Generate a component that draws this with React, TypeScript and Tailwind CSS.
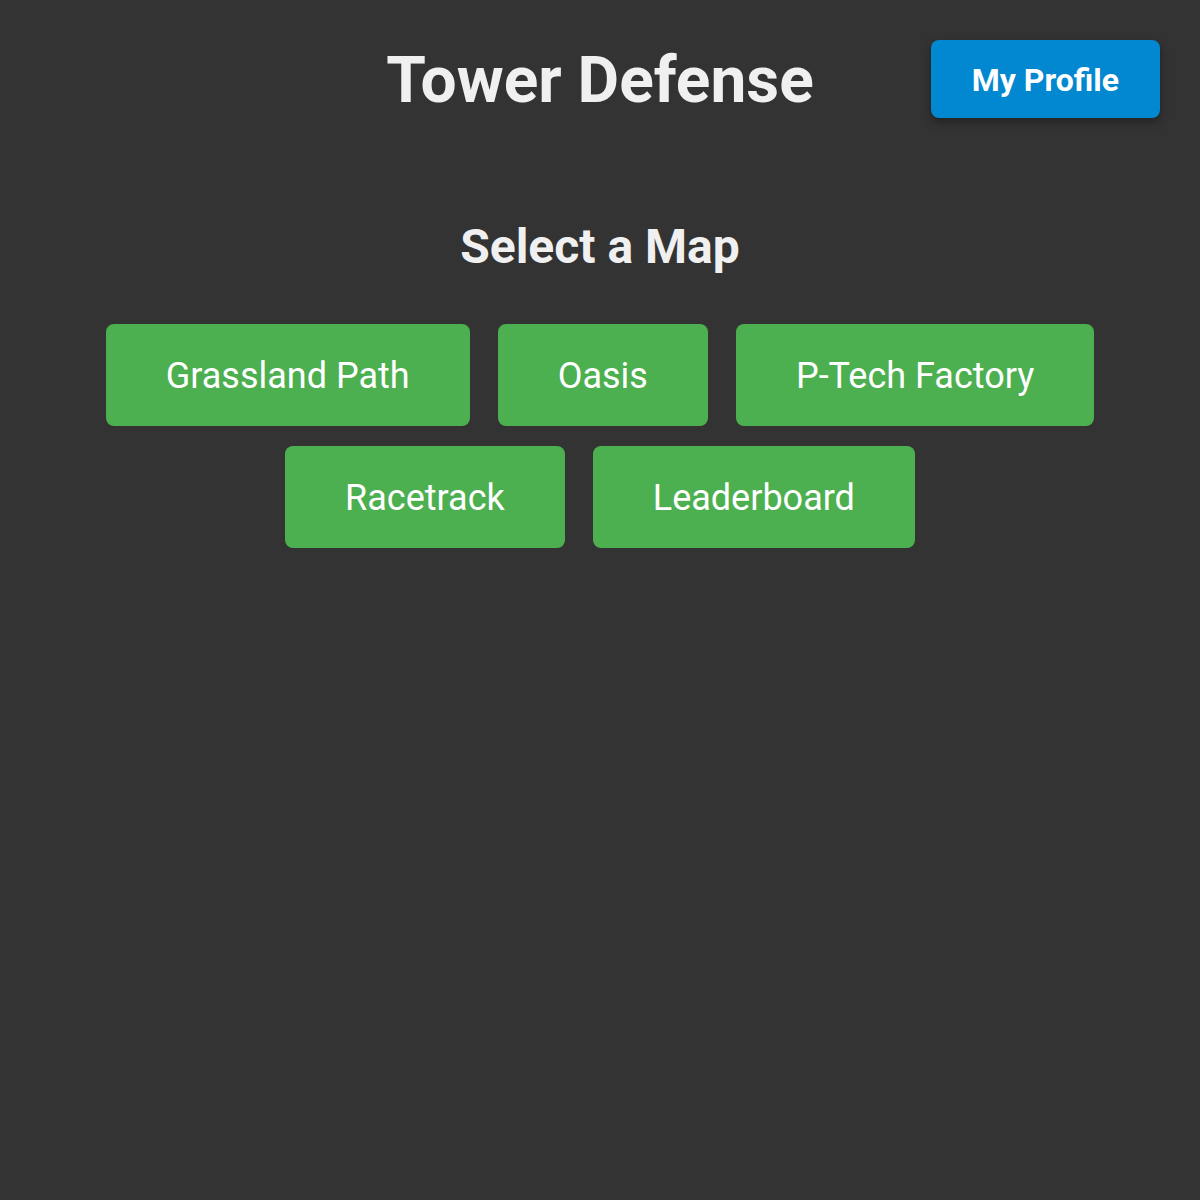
import React from 'react';

const maps = ['Grassland Path', 'Oasis', 'P-Tech Factory', 'Racetrack', 'Leaderboard'];

const App: React.FC = () => {
  return (
    <div
      className="relative min-h-[1200px] w-full bg-[#333333] text-[#f0f0f0]"
      style={{ fontFamily: 'Roboto, "Noto Sans", sans-serif' }}
    >
      <button className="absolute right-[40px] top-[40px] rounded-[8px] bg-[#0288d1] px-[41px] pb-[19px] pt-[21px] text-[32px] font-bold leading-[38px] text-white shadow-[0_4px_10px_rgba(0,0,0,0.35)]">
        My Profile
      </button>

      <div className="flex flex-col items-center pt-[43px]">
        <h1 className="text-[64px] font-bold leading-[75px]">Tower Defense</h1>

        <h2 className="mt-[101px] text-[48px] font-bold leading-[56px]">Select a Map</h2>

        <div className="mt-[49px] flex w-[1040px] flex-wrap justify-center gap-x-[28px] gap-y-[20px]">
          {maps.map((name) => (
            <button
              key={name}
              className="rounded-[8px] bg-[#4caf50] px-[60px] pb-[29px] pt-[31px] text-[36px] leading-[42px] text-white"
            >
              {name}
            </button>
          ))}
        </div>
      </div>
    </div>
  );
};

export default App;
